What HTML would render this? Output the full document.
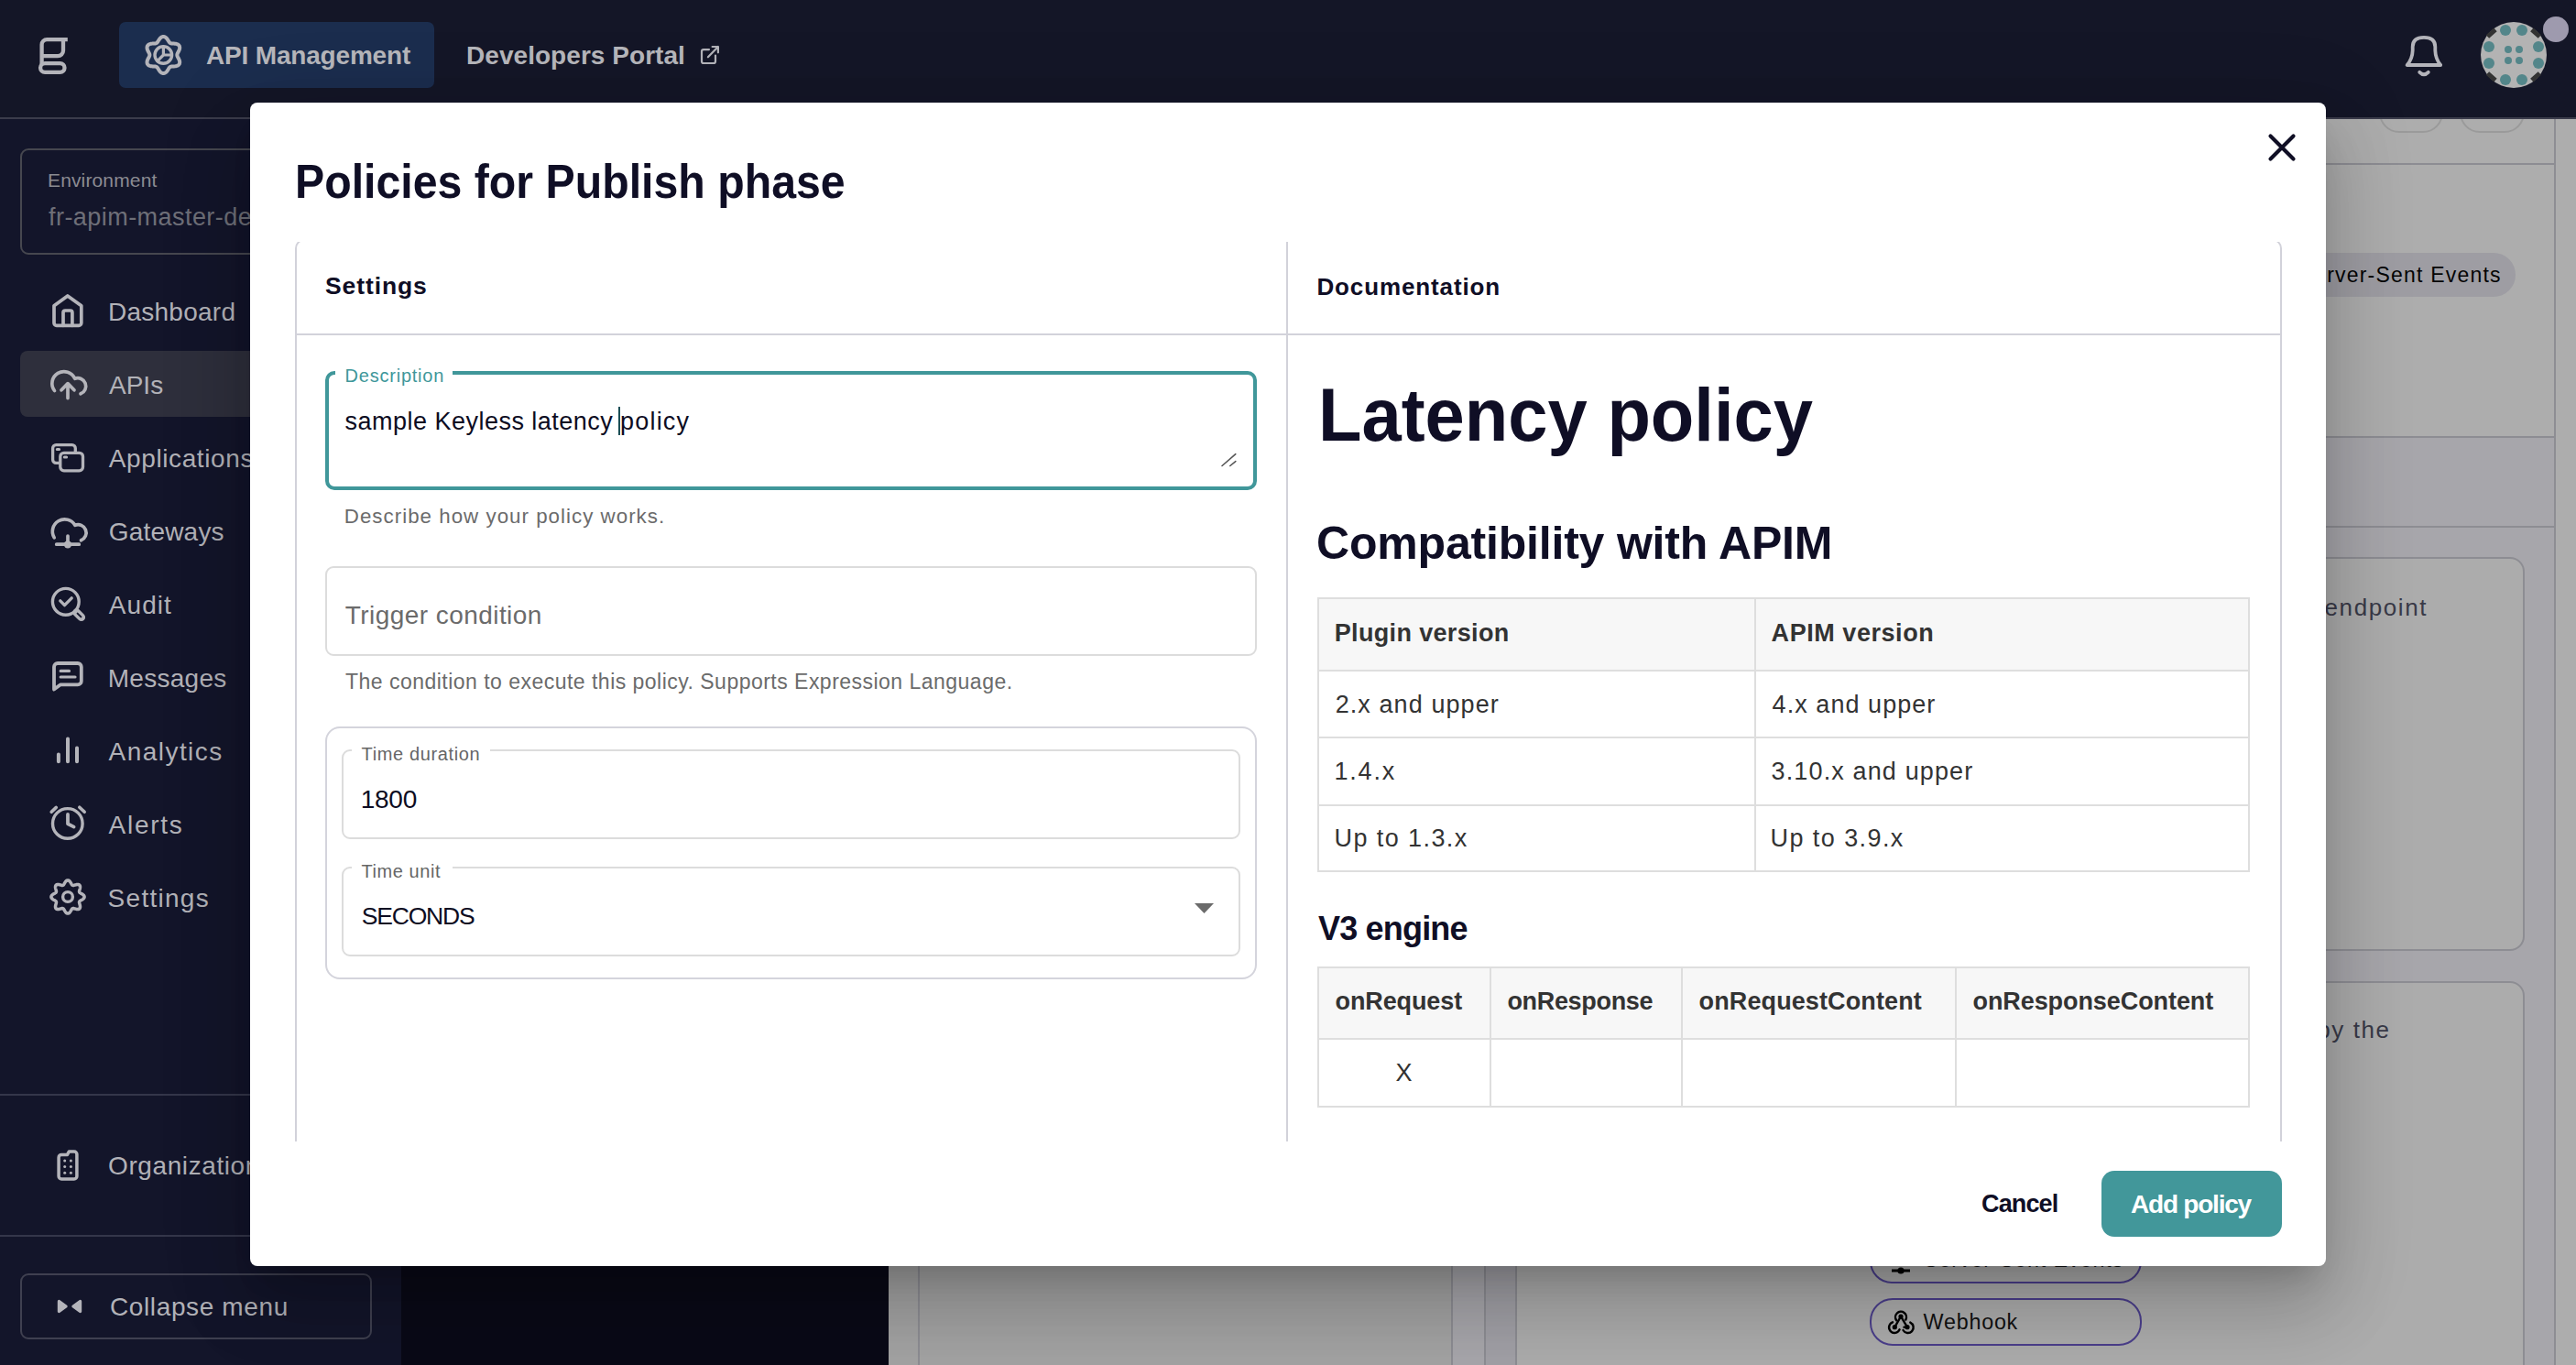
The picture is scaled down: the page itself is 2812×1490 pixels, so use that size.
<!DOCTYPE html>
<html><head><meta charset="utf-8"><style>
html,body{margin:0;padding:0;width:2812px;height:1490px;overflow:hidden;background:#14162a;}
body{position:relative;font-family:"Liberation Sans", sans-serif;}
.t{position:absolute;line-height:1;white-space:nowrap;}
svg{display:block}
</style></head><body>
<div style="position:absolute;left:970px;top:128px;width:1842px;height:1362px;background:#adadad;"></div>
<div style="position:absolute;left:2597px;top:100px;width:70px;height:45px;border:2px solid #9a9a9a;border-radius:0 0 22px 22px;box-sizing:border-box;"></div>
<div style="position:absolute;left:2685px;top:100px;width:71px;height:45px;border:2px solid #9a9a9a;border-radius:0 0 22px 22px;box-sizing:border-box;"></div>
<div style="position:absolute;left:970px;top:178px;width:1819px;height:2px;background:#8d8d93;"></div>
<div style="position:absolute;left:2300px;top:276px;width:446px;height:48px;background:#9e9da3;border-radius:24px;"></div>
<div class="t" style="right:82.5px;top:289.33px;font-size:23px;color:#050505;font-weight:400;letter-spacing:1.2px;margin-right:-1.2px;">Server-Sent Events</div>
<div style="position:absolute;left:970px;top:476px;width:1819px;height:2px;background:#8d8d93;"></div>
<div style="position:absolute;left:970px;top:478px;width:1819px;height:1012px;background:#a7a6ab;"></div>
<div style="position:absolute;left:970px;top:574px;width:1819px;height:2px;background:#8d8d93;"></div>
<div style="position:absolute;left:1654px;top:608px;width:1102px;height:430px;background:#acacac;border:2px solid #8d8d93;border-radius:16px;box-sizing:border-box;"></div>
<div class="t" style="right:163.5px;top:649.79px;font-size:26px;color:#393a48;font-weight:400;letter-spacing:1.6px;margin-right:-1.6px;">Define a dedicated endpoint</div>
<div style="position:absolute;left:1654px;top:1071px;width:1102px;height:460px;background:#acacac;border:2px solid #8d8d93;border-radius:16px;box-sizing:border-box;"></div>
<div class="t" style="right:204px;top:1111.49px;font-size:26px;color:#393a48;font-weight:400;letter-spacing:1.6px;margin-right:-1.6px;">Messages pushed by the</div>
<div style="position:absolute;left:2788px;top:128px;width:2px;height:1362px;background:#8d8d93;"></div>
<div style="position:absolute;left:2790px;top:128px;width:22px;height:1362px;background:#adadad;"></div>
<div style="position:absolute;left:970px;top:1382px;width:616px;height:108px;background:#a3a3a3;"></div>
<div style="position:absolute;left:1002px;top:1300px;width:584px;height:300px;border:2px solid #8d8d93;border-radius:16px;box-sizing:border-box;"></div>
<div style="position:absolute;left:1620px;top:1300px;width:34px;height:190px;background:#a1a0a6;border-left:2px solid #8d8d93;box-sizing:border-box;"></div>
<div style="position:absolute;left:2041px;top:1352px;width:297px;height:49px;border:2px solid #4b3f8c;border-radius:24px;box-sizing:border-box;"></div>
<div style="position:absolute;left:2041px;top:1417px;width:297px;height:52px;border:2px solid #4b3f8c;border-radius:25px;box-sizing:border-box;"></div>
<div class="t" style="left:2099.6px;top:1432.08px;font-size:23.3px;color:#111;font-weight:400;letter-spacing:0.78px;">Webhook</div>
<div class="t" style="left:2100px;top:1363.78px;font-size:23.3px;color:#111;font-weight:400;letter-spacing:0.9px;">Server-Sent Events</div>
<svg style="position:absolute;left:2055px;top:1375px" width="40" height="90" viewBox="2055 1375 40 90"><path d="M2065 1387H2085" stroke="#000" stroke-width="3"/><circle cx="2075" cy="1387" r="3.6" fill="#000"/><g fill="none" stroke="#000" stroke-width="2.4" stroke-linecap="round"><path d="M2078.5 1448.7H2082M2075 1437L2068.3 1448.7M2075 1437L2082 1448.7"/><path d="M2080.3 1440.6A6 6 0 1 0 2070.2 1441.3"/><path d="M2066 1443.3A6 6 0 1 0 2073.6 1451.3"/><path d="M2077.5 1452A6 6 0 1 0 2085.3 1443.6"/></g><circle cx="2075" cy="1437" r="2.6" fill="#000"/><circle cx="2068.3" cy="1448.7" r="2.6" fill="#000"/><circle cx="2082" cy="1448.7" r="2.6" fill="#000"/></svg>
<div style="position:absolute;left:0px;top:0px;width:2812px;height:128px;background:#141627;"></div>
<div style="position:absolute;left:0px;top:128px;width:2812px;height:2px;background:#3b3c4b;"></div>
<div style="position:absolute;left:130px;top:24px;width:344px;height:72px;background:#1b2d4e;border-radius:7px;"></div>
<div class="t" style="left:225px;top:46.80px;font-size:28px;color:#b6b6bb;font-weight:700;letter-spacing:-0.18px;">API Management</div>
<div class="t" style="left:509px;top:46.80px;font-size:28px;color:#b6b6bb;font-weight:700;letter-spacing:0.05px;">Developers Portal</div>
<div style="position:absolute;left:0px;top:130px;width:438px;height:1360px;background:#13152a;"></div>
<div style="position:absolute;left:438px;top:130px;width:532px;height:1360px;background:#0a0a17;"></div>
<div style="position:absolute;left:22px;top:162px;width:500px;height:116px;border:2.5px solid #46474f;border-radius:9px;box-sizing:border-box;"></div>
<div class="t" style="left:52px;top:186.22px;font-size:21px;color:#8b8b92;font-weight:400;letter-spacing:0.14px;">Environment</div>
<div class="t" style="left:53px;top:224.14px;font-size:27px;color:#6e6f78;font-weight:400;letter-spacing:0.45px;">fr-apim-master-dev</div>
<div style="position:absolute;left:22px;top:383px;width:460px;height:72px;background:#2e2f3c;border-radius:8px;"></div>
<div class="t" style="left:118px;top:326.80px;font-size:28px;color:#b2b2b8;font-weight:400;letter-spacing:0.25px;">Dashboard</div>
<div class="t" style="left:119px;top:406.80px;font-size:28px;color:#b2b2b8;font-weight:400;">APIs</div>
<div class="t" style="left:118.8px;top:486.80px;font-size:28px;color:#b2b2b8;font-weight:400;letter-spacing:0.6px;">Applications</div>
<div class="t" style="left:118.7px;top:566.80px;font-size:28px;color:#b2b2b8;font-weight:400;letter-spacing:0.2px;">Gateways</div>
<div class="t" style="left:118.8px;top:646.80px;font-size:28px;color:#b2b2b8;font-weight:400;letter-spacing:1.05px;">Audit</div>
<div class="t" style="left:117.7px;top:726.80px;font-size:28px;color:#b2b2b8;font-weight:400;letter-spacing:0.28px;">Messages</div>
<div class="t" style="left:118.6px;top:806.80px;font-size:28px;color:#b2b2b8;font-weight:400;letter-spacing:1.45px;">Analytics</div>
<div class="t" style="left:118.6px;top:886.80px;font-size:28px;color:#b2b2b8;font-weight:400;letter-spacing:1.7px;">Alerts</div>
<div class="t" style="left:117.6px;top:966.80px;font-size:28px;color:#b2b2b8;font-weight:400;letter-spacing:1.27px;">Settings</div>
<div style="position:absolute;left:0px;top:1194px;width:438px;height:2px;background:#34364a;"></div>
<div class="t" style="left:118px;top:1259.30px;font-size:28px;color:#b2b2b8;font-weight:400;letter-spacing:0.6px;">Organization</div>
<div style="position:absolute;left:0px;top:1348px;width:438px;height:2px;background:#34364a;"></div>
<div style="position:absolute;left:22px;top:1390px;width:384px;height:72px;border:2px solid #3f4050;border-radius:9px;box-sizing:border-box;"></div>
<div class="t" style="left:120px;top:1413.30px;font-size:28px;color:#b2b2b8;font-weight:400;letter-spacing:0.62px;">Collapse menu</div>
<svg style="position:absolute;left:0;top:0" width="2812" height="1490" viewBox="0 0 2812 1490"><g fill="none" stroke="#b4b4ba" stroke-width="4.3"><path d="M73.8 43.15H51.2A5.6 5.6 0 0 0 45.6 48.75V70"/><path d="M45.6 61.2H63A6 6 0 0 0 69 55.2V43.15"/><rect x="44.1" y="69.1" width="26.4" height="9.8" rx="4.9"/></g><path d="M193.35 60.00 L193.38 60.39 L193.45 60.79 L193.58 61.20 L193.74 61.62 L193.95 62.05 L194.18 62.51 L194.44 62.98 L194.71 63.48 L194.99 63.99 L195.25 64.53 L195.50 65.08 L195.73 65.65 L195.92 66.22 L196.06 66.80 L196.15 67.37 L196.18 67.94 L196.16 68.49 L196.06 69.02 L195.90 69.53 L195.67 70.00 L195.38 70.43 L195.02 70.83 L194.61 71.17 L194.14 71.48 L193.64 71.73 L193.09 71.94 L192.52 72.10 L191.93 72.23 L191.33 72.32 L190.72 72.37 L190.13 72.41 L189.54 72.43 L188.98 72.44 L188.44 72.46 L187.93 72.48 L187.45 72.52 L187.00 72.59 L186.59 72.68 L186.20 72.82 L185.85 72.99 L185.52 73.21 L185.22 73.47 L184.92 73.78 L184.65 74.14 L184.37 74.53 L184.09 74.97 L183.81 75.43 L183.52 75.91 L183.21 76.40 L182.88 76.90 L182.53 77.40 L182.15 77.87 L181.75 78.32 L181.32 78.74 L180.86 79.10 L180.39 79.42 L179.90 79.67 L179.39 79.85 L178.87 79.96 L178.35 80.00 L177.83 79.96 L177.31 79.85 L176.80 79.67 L176.31 79.42 L175.84 79.10 L175.38 78.74 L174.95 78.32 L174.55 77.87 L174.17 77.40 L173.82 76.90 L173.49 76.40 L173.18 75.91 L172.89 75.43 L172.61 74.97 L172.33 74.53 L172.05 74.14 L171.78 73.78 L171.48 73.47 L171.18 73.21 L170.85 72.99 L170.50 72.82 L170.11 72.68 L169.70 72.59 L169.25 72.52 L168.77 72.48 L168.26 72.46 L167.72 72.44 L167.16 72.43 L166.57 72.41 L165.98 72.37 L165.37 72.32 L164.77 72.23 L164.18 72.10 L163.61 71.94 L163.06 71.73 L162.56 71.48 L162.09 71.17 L161.68 70.83 L161.32 70.43 L161.03 70.00 L160.80 69.53 L160.64 69.02 L160.54 68.49 L160.52 67.94 L160.55 67.37 L160.64 66.80 L160.78 66.22 L160.97 65.65 L161.20 65.08 L161.45 64.53 L161.71 63.99 L161.99 63.48 L162.26 62.98 L162.52 62.51 L162.75 62.05 L162.96 61.62 L163.12 61.20 L163.25 60.79 L163.32 60.39 L163.35 60.00 L163.32 59.61 L163.25 59.21 L163.12 58.80 L162.96 58.38 L162.75 57.95 L162.52 57.49 L162.26 57.02 L161.99 56.52 L161.71 56.01 L161.45 55.47 L161.20 54.92 L160.97 54.35 L160.78 53.78 L160.64 53.20 L160.55 52.63 L160.52 52.06 L160.54 51.51 L160.64 50.98 L160.80 50.47 L161.03 50.00 L161.32 49.57 L161.68 49.17 L162.09 48.83 L162.56 48.52 L163.06 48.27 L163.61 48.06 L164.18 47.90 L164.77 47.77 L165.37 47.68 L165.98 47.63 L166.57 47.59 L167.16 47.57 L167.72 47.56 L168.26 47.54 L168.77 47.52 L169.25 47.48 L169.70 47.41 L170.11 47.32 L170.50 47.18 L170.85 47.01 L171.18 46.79 L171.48 46.53 L171.78 46.22 L172.05 45.86 L172.33 45.47 L172.61 45.03 L172.89 44.57 L173.18 44.09 L173.49 43.60 L173.82 43.10 L174.17 42.60 L174.55 42.13 L174.95 41.68 L175.38 41.26 L175.84 40.90 L176.31 40.58 L176.80 40.33 L177.31 40.15 L177.83 40.04 L178.35 40.00 L178.87 40.04 L179.39 40.15 L179.90 40.33 L180.39 40.58 L180.86 40.90 L181.32 41.26 L181.75 41.68 L182.15 42.13 L182.53 42.60 L182.88 43.10 L183.21 43.60 L183.52 44.09 L183.81 44.57 L184.09 45.03 L184.37 45.47 L184.65 45.86 L184.92 46.22 L185.22 46.53 L185.52 46.79 L185.85 47.01 L186.20 47.18 L186.59 47.32 L187.00 47.41 L187.45 47.48 L187.93 47.52 L188.44 47.54 L188.98 47.56 L189.54 47.57 L190.13 47.59 L190.72 47.63 L191.33 47.68 L191.93 47.77 L192.52 47.90 L193.09 48.06 L193.64 48.27 L194.14 48.52 L194.61 48.83 L195.02 49.17 L195.38 49.57 L195.67 50.00 L195.90 50.47 L196.06 50.98 L196.16 51.51 L196.18 52.06 L196.15 52.63 L196.06 53.20 L195.92 53.78 L195.73 54.35 L195.50 54.92 L195.25 55.47 L194.99 56.01 L194.71 56.52 L194.44 57.02 L194.18 57.49 L193.95 57.95 L193.74 58.38 L193.58 58.80 L193.45 59.21 L193.38 59.61Z" fill="none" stroke="#b4b4ba" stroke-linecap="round" stroke-linejoin="round" stroke-width="4"/><circle cx="178.3" cy="60" r="9.3" fill="none" stroke="#b4b4ba" stroke-linecap="round" stroke-linejoin="round" stroke-width="3.4"/><path d="M178.4 51V60H187.5M178.4 60L171.8 66.6" fill="none" stroke="#b4b4ba" stroke-linecap="round" stroke-linejoin="round" stroke-width="3.2" stroke-linecap="butt"/><path d="M774 54.1H768A2 2 0 0 0 766 56.1V67A2 2 0 0 0 768 69H779A2 2 0 0 0 781 67V60.5" fill="none" stroke="#b4b4ba" stroke-linecap="round" stroke-linejoin="round" stroke-width="2.2"/><path d="M772.9 62.3L783.9 51M777.6 51H783.9V57.3" fill="none" stroke="#b4b4ba" stroke-linecap="round" stroke-linejoin="round" stroke-width="2.2" stroke-linecap="butt" stroke-linejoin="miter"/><path d="M2627.6 71H2664.2C2660 66 2658.5 62 2658.3 55V51C2658.3 43 2653 40.8 2646 40.8C2639 40.8 2633.7 43 2633.7 51V55C2633.5 62 2632 66 2627.6 71Z" fill="none" stroke="#b4b4ba" stroke-linecap="round" stroke-linejoin="round" stroke-width="3.8"/><path d="M2641.2 78.8Q2646 83.6 2650.8 78.8" fill="none" stroke="#b4b4ba" stroke-linecap="round" stroke-linejoin="round" stroke-width="3.8"/><circle cx="2744" cy="60" r="36" fill="#b3b3b3"/><circle cx="2735" cy="33" r="6" fill="#53868a"/><circle cx="2753" cy="33" r="6" fill="#53868a"/><circle cx="2717" cy="51" r="6" fill="#53868a"/><circle cx="2717" cy="69" r="6" fill="#53868a"/><circle cx="2771" cy="51" r="6" fill="#53868a"/><circle cx="2771" cy="69" r="6" fill="#53868a"/><circle cx="2735" cy="87" r="6" fill="#53868a"/><circle cx="2753" cy="87" r="6" fill="#53868a"/><circle cx="2738" cy="54" r="4" fill="#53868a"/><circle cx="2750" cy="54" r="4" fill="#53868a"/><circle cx="2738" cy="66" r="4" fill="#53868a"/><circle cx="2750" cy="66" r="4" fill="#53868a"/><path d="M2715.5 40L2724 32.4M2763.8 32.4L2772.3 40M2715.5 80L2724 87.6M2763.8 87.6L2772.3 80" stroke="#333" stroke-width="5"/><circle cx="2790" cy="32" r="14" fill="#9e9aae"/><path d="M59 333.7L73.8 322.9L88.8 333.7V352.6A2.7 2.7 0 0 1 86.1 355.3H61.7A2.7 2.7 0 0 1 59 352.6Z" fill="none" stroke="#b4b4ba" stroke-linecap="round" stroke-linejoin="round" stroke-width="3.7"/><path d="M69 355.3V341.2A2.2 2.2 0 0 1 71.2 339H76.7A2.2 2.2 0 0 1 78.9 341.2V355.3" fill="none" stroke="#b4b4ba" stroke-linecap="round" stroke-linejoin="round" stroke-width="3.7"/><path d="M59.5 426.5A13 13 0 1 1 81.7 413.3A8.6 8.6 0 0 1 88 429.8" fill="none" stroke="#b4b4ba" stroke-linecap="round" stroke-linejoin="round" stroke-width="3.7"/><path d="M74 434.6V419M67 425.8L74 418.6L81 425.8" fill="none" stroke="#b4b4ba" stroke-linecap="round" stroke-linejoin="round" stroke-width="3.7"/><rect x="57.6" y="485.7" width="24.7" height="19.7" rx="3.6" fill="none" stroke="#b4b4ba" stroke-linecap="round" stroke-linejoin="round" stroke-width="3.3"/><rect x="65.8" y="494.3" width="24.7" height="19.5" rx="4" fill="#13152a" stroke="#b4b4ba" stroke-width="3.3"/><path d="M62.3 490.6H64.6M70.3 499.1H72.6" fill="none" stroke="#b4b4ba" stroke-linecap="round" stroke-linejoin="round" stroke-width="3"/><path d="M59.2 586.9A13 13 0 1 1 81.9 573.3A8.6 8.6 0 0 1 88.5 589.8" fill="none" stroke="#b4b4ba" stroke-linecap="round" stroke-linejoin="round" stroke-width="3.7"/><path d="M74 585V594.4M61.7 594.2H86.3" fill="none" stroke="#b4b4ba" stroke-linecap="round" stroke-linejoin="round" stroke-width="3.7"/><circle cx="74" cy="594.4" r="4.2" fill="#b4b4ba"/><circle cx="71.8" cy="656.8" r="14.4" fill="none" stroke="#b4b4ba" stroke-linecap="round" stroke-linejoin="round" stroke-width="3.4"/><path d="M83.6 668.6L88.8 673.8" stroke="#b4b4ba" stroke-width="8.6" stroke-linecap="round"/><path d="M84.6 669.6L88.4 673.4" stroke="#13152a" stroke-width="2" stroke-linecap="round"/><path d="M65.8 655.9L70.5 660.6L78.2 652.9" fill="none" stroke="#b4b4ba" stroke-linecap="round" stroke-linejoin="round" stroke-width="3.4"/><path d="M59 752.5V728A4 4 0 0 1 63 724H84.8A4 4 0 0 1 88.8 728V743.4A4 4 0 0 1 84.8 747.4H65.8Z" fill="none" stroke="#b4b4ba" stroke-linecap="round" stroke-linejoin="round" stroke-width="3.8"/><path d="M66.2 732.4H75.5M66.2 739H82" fill="none" stroke="#b4b4ba" stroke-linecap="round" stroke-linejoin="round" stroke-width="3.2"/><path d="M63.9 823.4V831.3M74 806.5V831.3M84 816.6V831.3" fill="none" stroke="#b4b4ba" stroke-linecap="round" stroke-linejoin="round" stroke-width="4"/><circle cx="73.8" cy="898.9" r="16.3" fill="none" stroke="#b4b4ba" stroke-linecap="round" stroke-linejoin="round" stroke-width="3.4"/><path d="M74 889V899.3L80.6 902.6" fill="none" stroke="#b4b4ba" stroke-linecap="round" stroke-linejoin="round" stroke-width="3.8"/><path d="M56.2 886.3L61.3 881.4M86.8 881.2L92.2 886.3" fill="none" stroke="#b4b4ba" stroke-linecap="round" stroke-linejoin="round" stroke-width="3.6"/><path d="M92.10 979.00 L92.05 979.47 L91.89 979.94 L91.63 980.39 L91.28 980.82 L90.85 981.22 L90.38 981.59 L89.86 981.94 L89.33 982.26 L88.80 982.55 L88.30 982.83 L87.83 983.10 L87.43 983.36 L87.09 983.64 L86.83 983.93 L86.66 984.24 L86.56 984.59 L86.54 984.98 L86.58 985.41 L86.68 985.88 L86.82 986.40 L86.98 986.95 L87.14 987.53 L87.29 988.14 L87.41 988.75 L87.49 989.35 L87.50 989.93 L87.44 990.48 L87.31 990.98 L87.09 991.43 L86.80 991.80 L86.43 992.09 L85.98 992.31 L85.48 992.44 L84.93 992.50 L84.35 992.49 L83.75 992.41 L83.14 992.29 L82.53 992.14 L81.95 991.98 L81.40 991.82 L80.88 991.68 L80.41 991.58 L79.98 991.54 L79.59 991.56 L79.24 991.66 L78.93 991.83 L78.64 992.09 L78.36 992.43 L78.10 992.83 L77.83 993.30 L77.55 993.80 L77.26 994.33 L76.94 994.86 L76.59 995.38 L76.22 995.85 L75.82 996.28 L75.39 996.63 L74.94 996.89 L74.47 997.05 L74.00 997.10 L73.53 997.05 L73.06 996.89 L72.61 996.63 L72.18 996.28 L71.78 995.85 L71.41 995.38 L71.06 994.86 L70.74 994.33 L70.45 993.80 L70.17 993.30 L69.90 992.83 L69.64 992.43 L69.36 992.09 L69.07 991.83 L68.76 991.66 L68.41 991.56 L68.02 991.54 L67.59 991.58 L67.12 991.68 L66.60 991.82 L66.05 991.98 L65.47 992.14 L64.86 992.29 L64.25 992.41 L63.65 992.49 L63.07 992.50 L62.52 992.44 L62.02 992.31 L61.57 992.09 L61.20 991.80 L60.91 991.43 L60.69 990.98 L60.56 990.48 L60.50 989.93 L60.51 989.35 L60.59 988.75 L60.71 988.14 L60.86 987.53 L61.02 986.95 L61.18 986.40 L61.32 985.88 L61.42 985.41 L61.46 984.98 L61.44 984.59 L61.34 984.24 L61.17 983.93 L60.91 983.64 L60.57 983.36 L60.17 983.10 L59.70 982.83 L59.20 982.55 L58.67 982.26 L58.14 981.94 L57.62 981.59 L57.15 981.22 L56.72 980.82 L56.37 980.39 L56.11 979.94 L55.95 979.47 L55.90 979.00 L55.95 978.53 L56.11 978.06 L56.37 977.61 L56.72 977.18 L57.15 976.78 L57.62 976.41 L58.14 976.06 L58.67 975.74 L59.20 975.45 L59.70 975.17 L60.17 974.90 L60.57 974.64 L60.91 974.36 L61.17 974.07 L61.34 973.76 L61.44 973.41 L61.46 973.02 L61.42 972.59 L61.32 972.12 L61.18 971.60 L61.02 971.05 L60.86 970.47 L60.71 969.86 L60.59 969.25 L60.51 968.65 L60.50 968.07 L60.56 967.52 L60.69 967.02 L60.91 966.57 L61.20 966.20 L61.57 965.91 L62.02 965.69 L62.52 965.56 L63.07 965.50 L63.65 965.51 L64.25 965.59 L64.86 965.71 L65.47 965.86 L66.05 966.02 L66.60 966.18 L67.12 966.32 L67.59 966.42 L68.02 966.46 L68.41 966.44 L68.76 966.34 L69.07 966.17 L69.36 965.91 L69.64 965.57 L69.90 965.17 L70.17 964.70 L70.45 964.20 L70.74 963.67 L71.06 963.14 L71.41 962.62 L71.78 962.15 L72.18 961.72 L72.61 961.37 L73.06 961.11 L73.53 960.95 L74.00 960.90 L74.47 960.95 L74.94 961.11 L75.39 961.37 L75.82 961.72 L76.22 962.15 L76.59 962.62 L76.94 963.14 L77.26 963.67 L77.55 964.20 L77.83 964.70 L78.10 965.17 L78.36 965.57 L78.64 965.91 L78.93 966.17 L79.24 966.34 L79.59 966.44 L79.98 966.46 L80.41 966.42 L80.88 966.32 L81.40 966.18 L81.95 966.02 L82.53 965.86 L83.14 965.71 L83.75 965.59 L84.35 965.51 L84.93 965.50 L85.48 965.56 L85.98 965.69 L86.43 965.91 L86.80 966.20 L87.09 966.57 L87.31 967.02 L87.44 967.52 L87.50 968.07 L87.49 968.65 L87.41 969.25 L87.29 969.86 L87.14 970.47 L86.98 971.05 L86.82 971.60 L86.68 972.12 L86.58 972.59 L86.54 973.02 L86.56 973.41 L86.66 973.76 L86.83 974.07 L87.09 974.36 L87.43 974.64 L87.83 974.90 L88.30 975.17 L88.80 975.45 L89.33 975.74 L89.86 976.06 L90.38 976.41 L90.85 976.78 L91.28 977.18 L91.63 977.61 L91.89 978.06 L92.05 978.53Z" fill="none" stroke="#b4b4ba" stroke-linecap="round" stroke-linejoin="round" stroke-width="3.5"/><circle cx="74" cy="979" r="5.4" fill="none" stroke="#b4b4ba" stroke-linecap="round" stroke-linejoin="round" stroke-width="3.4"/><path d="M64.1 1263.4A3 3 0 0 1 67.1 1260.4H73.5L75.3 1257.1H80.9A3 3 0 0 1 83.9 1260.1V1283.9A3 3 0 0 1 80.9 1286.9H67.1A3 3 0 0 1 64.1 1283.9Z" fill="none" stroke="#b4b4ba" stroke-linecap="round" stroke-linejoin="round" stroke-width="3.5"/><circle cx="70.7" cy="1266.9" r="1.5" fill="#b4b4ba"/><circle cx="77.4" cy="1266.9" r="1.5" fill="#b4b4ba"/><circle cx="70.7" cy="1273.5" r="1.5" fill="#b4b4ba"/><circle cx="77.4" cy="1273.5" r="1.5" fill="#b4b4ba"/><circle cx="70.7" cy="1280.3" r="1.5" fill="#b4b4ba"/><circle cx="77.4" cy="1280.3" r="1.5" fill="#b4b4ba"/><path d="M64.5 1420.5L72 1426L64.5 1431.5Z" fill="#b4b4ba" stroke="#b4b4ba" stroke-width="3.4" stroke-linejoin="round"/><path d="M87.5 1420.5L80 1426L87.5 1431.5Z" fill="#b4b4ba" stroke="#b4b4ba" stroke-width="3.4" stroke-linejoin="round"/></svg>
<div style="position:absolute;left:273px;top:112px;width:2266px;height:1270px;background:#fff;border-radius:8px;box-shadow:0 22px 30px -14px rgba(0,0,0,.16),0 48px 76px 6px rgba(0,0,0,.13),0 18px 92px 16px rgba(0,0,0,.11);"></div>
<div class="t" style="left:322px;top:172.38px;font-size:52px;color:#0f0e25;font-weight:700;transform:scaleX(0.928);transform-origin:0 0;">Policies for Publish phase</div>
<svg style="position:absolute;left:2470px;top:140px" width="42" height="42" viewBox="0 0 42 42"><path d="M8.5 8.5L33.5 33.5M33.5 8.5L8.5 33.5" stroke="#100f25" stroke-width="4.2" stroke-linecap="round"/></svg>
<div style="position:absolute;left:322px;top:264px;width:2169px;height:982px;overflow:hidden;"><div style="position:absolute;left:0;top:-3px;width:2169px;height:1100px;border:2px solid #d2d2da;border-radius:10px;box-sizing:border-box;"></div></div>
<div style="position:absolute;left:322px;top:364px;width:2168px;height:2px;background:#d2d2da;"></div>
<div style="position:absolute;left:1404px;top:264px;width:2px;height:982px;background:#d2d2da;"></div>
<div class="t" style="left:355px;top:299.17px;font-size:26.5px;color:#0f0e25;font-weight:700;letter-spacing:0.9px;">Settings</div>
<div class="t" style="left:1437.4px;top:299.79px;font-size:26px;color:#0f0e25;font-weight:700;letter-spacing:0.88px;">Documentation</div>
<div style="position:absolute;left:355px;top:405px;width:1017px;height:130px;border:4px solid #40979a;border-radius:10px;box-sizing:border-box;"></div>
<div style="position:absolute;left:366px;top:400px;width:128px;height:12px;background:#fff;"></div>
<div class="t" style="left:376.6px;top:399.77px;font-size:20px;color:#40979a;font-weight:400;letter-spacing:0.77px;">Description</div>
<div class="t" style="left:376.6px;top:447.14px;font-size:27px;color:#0d0c22;font-weight:400;letter-spacing:0.48px;">sample Keyless latency</div>
<div class="t" style="left:677px;top:447.14px;font-size:27px;color:#0d0c22;font-weight:400;letter-spacing:1.2px;">policy</div>
<div style="position:absolute;left:675px;top:444px;width:2px;height:31px;background:#1b4f57;"></div>
<svg style="position:absolute;left:1330px;top:492px" width="22" height="20" viewBox="0 0 22 20"><path d="M4 16.5L18.8 3.7M12.8 16.5L18.8 11.6" stroke="#555" stroke-width="1.6" stroke-linecap="round"/></svg>
<div class="t" style="left:375.8px;top:552.62px;font-size:22.3px;color:#6b6b6b;font-weight:400;letter-spacing:1.03px;">Describe how your policy works.</div>
<div style="position:absolute;left:355px;top:618px;width:1017px;height:98px;border:2px solid #dcdcdc;border-radius:9px;box-sizing:border-box;"></div>
<div class="t" style="left:376.8px;top:657.70px;font-size:28px;color:#6b6b6b;font-weight:400;letter-spacing:0.44px;">Trigger condition</div>
<div class="t" style="left:377px;top:733.33px;font-size:23px;color:#6b6b6b;font-weight:400;letter-spacing:0.48px;">The condition to execute this policy. Supports Expression Language.</div>
<div style="position:absolute;left:355px;top:793px;width:1017px;height:276px;border:2px solid #d4d4dc;border-radius:16px;box-sizing:border-box;"></div>
<div style="position:absolute;left:373px;top:818px;width:981px;height:98px;border:2px solid #dcdcdc;border-radius:9px;box-sizing:border-box;"></div>
<div style="position:absolute;left:384px;top:812px;width:151px;height:10px;background:#fff;"></div>
<div class="t" style="left:394.6px;top:813.07px;font-size:20px;color:#666;font-weight:400;letter-spacing:0.62px;">Time duration</div>
<div class="t" style="left:393.7px;top:858.70px;font-size:28px;color:#0d0c22;font-weight:400;letter-spacing:-0.23px;">1800</div>
<div style="position:absolute;left:373px;top:946px;width:981px;height:98px;border:2px solid #dcdcdc;border-radius:9px;box-sizing:border-box;"></div>
<div style="position:absolute;left:384px;top:940px;width:110px;height:10px;background:#fff;"></div>
<div class="t" style="left:394.6px;top:941.47px;font-size:20px;color:#666;font-weight:400;letter-spacing:0.55px;">Time unit</div>
<div class="t" style="left:394.7px;top:987.37px;font-size:26.5px;color:#0d0c22;font-weight:400;letter-spacing:-1.17px;">SECONDS</div>
<svg style="position:absolute;left:1304px;top:986px" width="22" height="12" viewBox="0 0 22 12"><path d="M0 0H21L10.5 11z" fill="#6b6b6b"/></svg>
<div class="t" style="left:1439.2px;top:412.29px;font-size:82px;color:#0f0e25;font-weight:700;transform:scaleX(0.948);transform-origin:0 0;">Latency policy</div>
<div class="t" style="left:1437px;top:567.67px;font-size:50px;color:#0f0e25;font-weight:700;letter-spacing:-0.19px;">Compatibility with APIM</div>
<div style="position:absolute;left:1438px;top:652px;width:1018px;height:300px;border:2px solid #dedede;box-sizing:border-box;"></div>
<div style="position:absolute;left:1440px;top:654px;width:1014px;height:78px;background:#f7f7f7;"></div>
<div style="position:absolute;left:1440px;top:731px;width:1014px;height:2px;background:#dedede;"></div>
<div style="position:absolute;left:1440px;top:804px;width:1014px;height:2px;background:#dedede;"></div>
<div style="position:absolute;left:1440px;top:878px;width:1014px;height:2px;background:#dedede;"></div>
<div style="position:absolute;left:1915px;top:654px;width:2px;height:296px;background:#dedede;"></div>
<div class="t" style="left:1456.7px;top:678.14px;font-size:27px;color:#333;font-weight:700;letter-spacing:0.35px;">Plugin version</div>
<div class="t" style="left:1933.6px;top:678.14px;font-size:27px;color:#333;font-weight:700;letter-spacing:0.55px;">APIM version</div>
<div class="t" style="left:1457.7px;top:755.64px;font-size:27px;color:#333;font-weight:400;letter-spacing:1.08px;">2.x and upper</div>
<div class="t" style="left:1934.6px;top:755.64px;font-size:27px;color:#333;font-weight:400;letter-spacing:1.05px;">4.x and upper</div>
<div class="t" style="left:1456.5px;top:828.94px;font-size:27px;color:#333;font-weight:400;letter-spacing:1.8px;">1.4.x</div>
<div class="t" style="left:1933.6px;top:828.94px;font-size:27px;color:#333;font-weight:400;letter-spacing:1.13px;">3.10.x and upper</div>
<div class="t" style="left:1456.5px;top:902.24px;font-size:27px;color:#333;font-weight:400;letter-spacing:1.42px;">Up to 1.3.x</div>
<div class="t" style="left:1932.6px;top:902.24px;font-size:27px;color:#333;font-weight:400;letter-spacing:1.42px;">Up to 3.9.x</div>
<div class="t" style="left:1439px;top:996.13px;font-size:36px;color:#0f0e25;font-weight:700;letter-spacing:-0.81px;">V3 engine</div>
<div style="position:absolute;left:1438px;top:1055px;width:1018px;height:154px;border:2px solid #dedede;box-sizing:border-box;"></div>
<div style="position:absolute;left:1440px;top:1057px;width:1014px;height:77px;background:#f7f7f7;"></div>
<div style="position:absolute;left:1440px;top:1133px;width:1014px;height:2px;background:#dedede;"></div>
<div style="position:absolute;left:1626px;top:1057px;width:2px;height:150px;background:#dedede;"></div>
<div style="position:absolute;left:1835px;top:1057px;width:2px;height:150px;background:#dedede;"></div>
<div style="position:absolute;left:2134px;top:1057px;width:2px;height:150px;background:#dedede;"></div>
<div class="t" style="left:1457.5px;top:1080.14px;font-size:27px;color:#333;font-weight:700;letter-spacing:-0.11px;">onRequest</div>
<div class="t" style="left:1645.4px;top:1080.14px;font-size:27px;color:#333;font-weight:700;letter-spacing:-0.32px;">onResponse</div>
<div class="t" style="left:1854.6px;top:1080.14px;font-size:27px;color:#333;font-weight:700;letter-spacing:0.11px;">onRequestContent</div>
<div class="t" style="left:2153.5px;top:1080.14px;font-size:27px;color:#333;font-weight:700;letter-spacing:-0.08px;">onResponseContent</div>
<div class="t" style="left:1523.5px;top:1158.14px;font-size:27px;color:#333;font-weight:400;">X</div>
<div class="t" style="left:2163px;top:1301.14px;font-size:27px;color:#0f0e25;font-weight:700;letter-spacing:-0.86px;">Cancel</div>
<div style="position:absolute;left:2294px;top:1278px;width:197px;height:72px;background:#42979a;border-radius:14px;"></div>
<div class="t" style="left:2326px;top:1300.70px;font-size:28px;color:#fff;font-weight:700;letter-spacing:-1.22px;">Add policy</div>
</body></html>
